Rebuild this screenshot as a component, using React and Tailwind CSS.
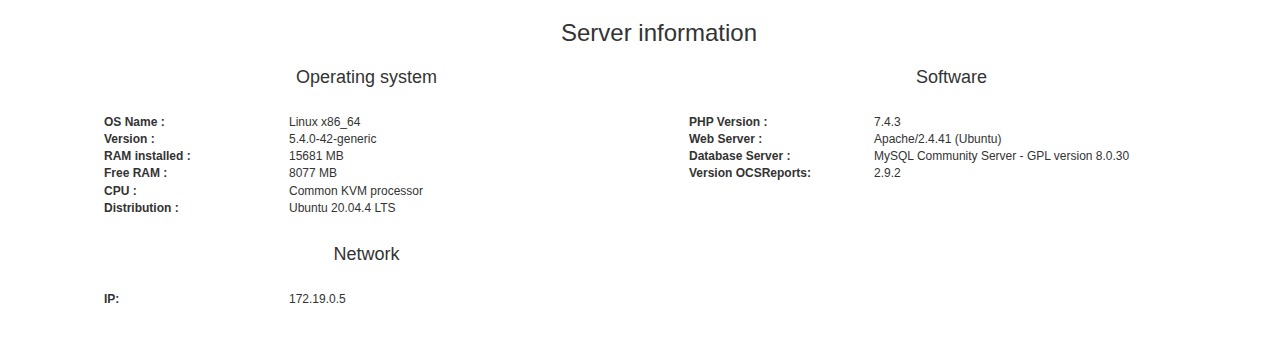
export default function App() {
  const os = [
    ["OS Name :", "Linux x86_64"],
    ["Version :", "5.4.0-42-generic"],
    ["RAM installed :", "15681 MB"],
    ["Free RAM :", "8077 MB"],
    ["CPU :", "Common KVM processor"],
    ["Distribution :", "Ubuntu 20.04.4 LTS"],
  ];
  const sw = [
    ["PHP Version :", "7.4.3"],
    ["Web Server :", "Apache/2.4.41 (Ubuntu)"],
    ["Database Server :", "MySQL Community Server - GPL version 8.0.30"],
    ["Version OCSReports:", "2.9.2"],
  ];
  const net = [["IP:", "172.19.0.5"]];

  const Rows = ({ rows }) => (
    <div className="flex flex-col px-[15px]">
      {rows.map(([k, v]) => (
        <div key={k} className="flex text-[12px] leading-[17.14px]">
          <div className="w-[185px] px-[15px] font-bold">{k}</div>
          <div className="flex-1 px-[15px]">{v}</div>
        </div>
      ))}
    </div>
  );

  const H = ({ children, className = "" }) => (
    <h4 className={"text-center text-[18px] leading-[20px] " + className}>{children}</h4>
  );

  return (
    <div
      className="w-[1275px] h-[355px] bg-white text-[#333]"
      style={{ fontFamily: '"Liberation Sans", Arial, sans-serif' }}
    >
      <div className="ml-[74px] w-[1170px] pt-[20px]">
        <h3 className="text-center text-[24px] leading-[26px]">Server information</h3>
        <div className="flex mt-[21px]">
          <div className="w-[585px] flex flex-col">
            <H>Operating system</H>
            <div className="mt-[27px]">
              <Rows rows={os} />
            </div>
            <H className="mt-[27px]">Network</H>
            <div className="mt-[27px]">
              <Rows rows={net} />
            </div>
          </div>
          <div className="w-[585px] flex flex-col">
            <H>Software</H>
            <div className="mt-[27px]">
              <Rows rows={sw} />
            </div>
          </div>
        </div>
      </div>
    </div>
  );
}
